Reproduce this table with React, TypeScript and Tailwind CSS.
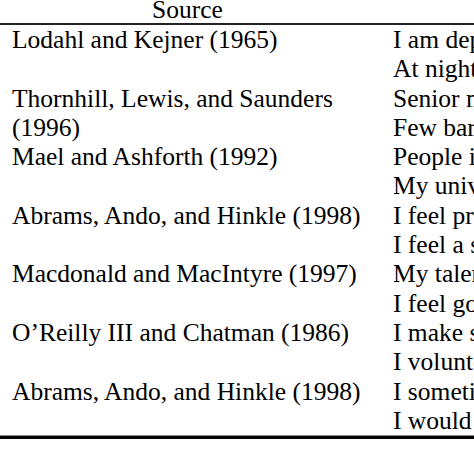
import React from "react";

const rows: { source: string; items: [string, string] }[] = [
  {
    source: "Lodahl and Kejner (1965)",
    items: [
      "I am depressed when I fail at something connected with my job",
      "At night I often think about my work",
    ],
  },
  {
    source: "Thornhill, Lewis, and Saunders (1996)",
    items: [
      "Senior management values its employees",
      "Few barriers exist to advancement",
    ],
  },
  {
    source: "Mael and Ashforth (1992)",
    items: [
      "People in my university are proud",
      "My university's successes are my successes",
    ],
  },
  {
    source: "Abrams, Ando, and Hinkle (1998)",
    items: ["I feel proud to work here", "I feel a strong sense of belonging"],
  },
  {
    source: "Macdonald and MacIntyre (1997)",
    items: ["My talents are used well here", "I feel good about my work"],
  },
  {
    source: "O\u2019Reilly III and Chatman (1986)",
    items: ["I make sacrifices for my university", "I volunteer for extra tasks"],
  },
  {
    source: "Abrams, Ando, and Hinkle (1998)",
    items: ["I sometimes think about leaving", "I would like to stay here"],
  },
];

export default function App() {
  return (
    <div
      className="w-[474px] h-[474px] overflow-hidden bg-white text-black text-[25.5px] leading-[29.3px]"
      style={{ fontFamily: '"Liberation Serif", "Times New Roman", serif' }}
    >
      <div className="h-[23px] flex">
        <div className="w-[375px] text-center -mt-[5px]">Source</div>
      </div>
      <div className="h-[2px] bg-[#222]" />
      <div className="grid grid-cols-[393px_81px] auto-rows-[29.3px]">
        {rows.map((r, i) => (
          <React.Fragment key={i}>
            <div className="row-span-2 pl-[12px] pr-[14px]">{r.source}</div>
            <div className="whitespace-nowrap overflow-hidden">{r.items[0]}</div>
            <div className="whitespace-nowrap overflow-hidden">{r.items[1]}</div>
          </React.Fragment>
        ))}
      </div>
      <div className="h-[1px] bg-[#888]" />
      <div className="h-[3px] bg-black" />
    </div>
  );
}
